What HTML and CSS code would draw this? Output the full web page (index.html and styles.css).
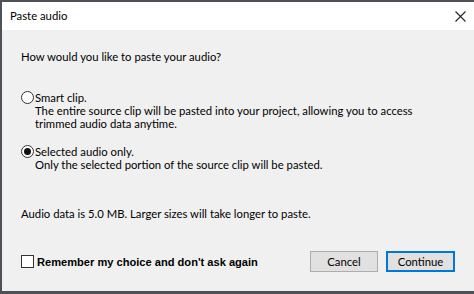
FILE: index.html
```html
<!DOCTYPE html>
<html>
<head>
<meta charset="utf-8">
<link rel="stylesheet" href="styles.css">
</head>
<body>
<div class="window">
  <div class="titlebar">
    <span class="title">Paste audio</span>
    <svg class="close" width="11" height="11" viewBox="0 0 11 11"><path d="M0.5 0.5 L10.5 10.5 M10.5 0.5 L0.5 10.5" stroke="#222" stroke-width="1.1" fill="none"/></svg>
  </div>
  <div class="content">
    <p class="question">How would you like to paste your audio?</p>
    <div class="option">
      <div class="opt-head"><span class="radio"></span><span>Smart clip.</span></div>
      <div class="opt-desc">The entire source clip will be pasted into your project, allowing you to access<br>trimmed audio data anytime.</div>
    </div>
    <div class="option second">
      <div class="opt-head"><span class="radio checked"></span><span>Selected audio only.</span></div>
      <div class="opt-desc">Only the selected portion of the source clip will be pasted.</div>
    </div>
    <p class="info">Audio data is 5.0 MB. Larger sizes will take longer to paste.</p>
    <div class="footer">
      <label class="remember"><span class="check"></span><span>Remember my choice and don't ask again</span></label>
      <div class="buttons">
        <button class="btn">Cancel</button>
        <button class="btn primary">Continue</button>
      </div>
    </div>
  </div>
</div>
</body>
</html>
```
FILE: styles.css
```css
html, body {
  margin: 0;
  padding: 0;
}
body {
  width: 474px;
  height: 294px;
  overflow: hidden;
  font-family: Lato, "Noto Sans", sans-serif;
  font-size: 11.3px;
  color: #000;
}
.window {
  box-sizing: border-box;
  width: 474px;
  height: 294px;
  border-top: 2px solid #505058;
  border-left: 2px solid #505058;
  border-bottom: 3px solid #505058;
  display: flex;
  flex-direction: column;
}
.titlebar {
  height: 28px;
  background: #fff;
  display: flex;
  align-items: center;
  justify-content: space-between;
  padding: 0 8px 0 8px;
  flex: none;
}
.title {
  line-height: 16px;
}
.close {
  display: block;
}
.content {
  flex: 1;
  background: #f0f0f0;
  padding: 19px 0 0 19px;
  display: flex;
  flex-direction: column;
}
p {
  margin: 0;
  line-height: 16px;
}
.question {
  margin-bottom: 25px;
}
.option {
  line-height: 13px;
}
.option.second {
  margin-top: 14px;
}
.opt-head {
  display: flex;
  align-items: center;
  height: 14px;
}
.radio {
  box-sizing: border-box;
  width: 13px;
  height: 13px;
  border: 1px solid #333;
  border-radius: 50%;
  background: #fff;
  margin-right: 1px;
  position: relative;
}
.radio.checked::after {
  content: "";
  position: absolute;
  left: 2px;
  top: 2px;
  width: 7px;
  height: 7px;
  border-radius: 50%;
  background: #111;
}
.opt-desc {
  padding-left: 14px;
  line-height: 13px;
}
.info {
  margin-top: 35px;
}
.footer {
  margin-top: auto;
  margin-bottom: 19px;
  display: flex;
  align-items: center;
  justify-content: space-between;
  padding-right: 19px;
}
.remember {
  display: flex;
  align-items: center;
  font-family: "Liberation Sans", Arial, sans-serif;
  font-weight: bold;
  font-size: 11.1px;
}
.check {
  box-sizing: border-box;
  width: 13px;
  height: 13px;
  border: 1px solid #333;
  background: #fff;
  margin-right: 3px;
}
.buttons {
  display: flex;
  gap: 8px;
}
.btn {
  box-sizing: border-box;
  width: 68px;
  height: 21px;
  padding: 0;
  background: #e1e1e1;
  border: 1px solid #adadad;
  font-family: Lato, "Noto Sans", sans-serif;
  font-size: 11.3px;
  color: #000;
}
.btn.primary {
  width: 69px;
  border: 2px solid #0078d7;
}
```
